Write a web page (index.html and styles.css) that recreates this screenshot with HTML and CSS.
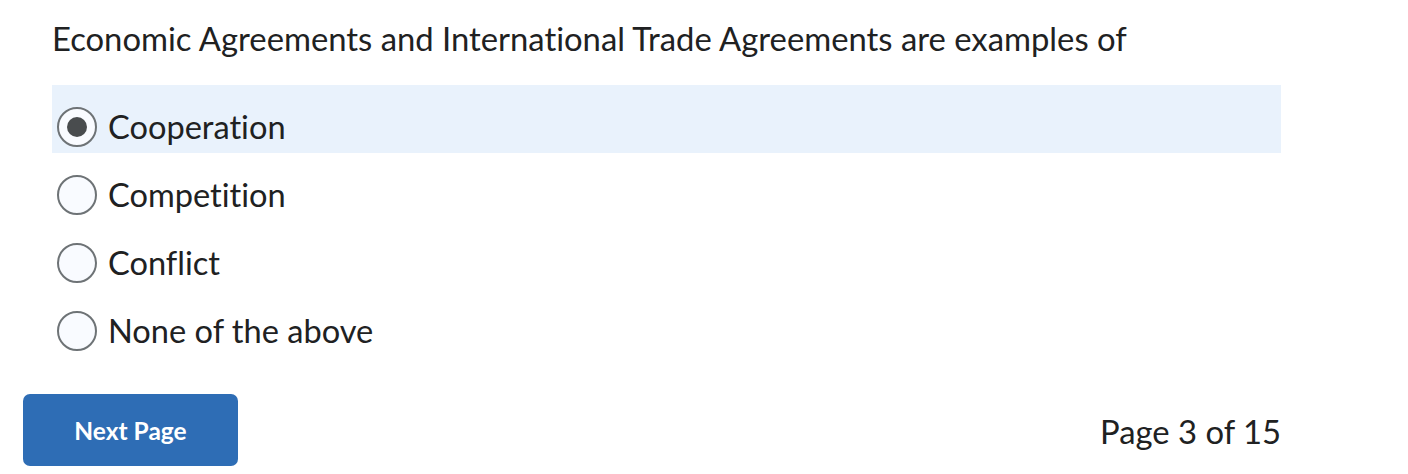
FILE: index.html
```html
<!DOCTYPE html>
<html>
<head>
<meta charset="utf-8">
<link rel="stylesheet" href="styles.css">
</head>
<body>
<div class="page">
  <p class="question">Economic Agreements and International Trade Agreements are examples of</p>
  <div class="options">
    <label class="option selected"><span class="radio"><span class="dot"></span></span><span class="label">Cooperation</span></label>
    <label class="option"><span class="radio"></span><span class="label">Competition</span></label>
    <label class="option"><span class="radio"></span><span class="label">Conflict</span></label>
    <label class="option"><span class="radio"></span><span class="label">None of the above</span></label>
  </div>
  <div class="footer">
    <button class="next">Next Page</button>
    <span class="pager">Page 3 of 15</span>
  </div>
</div>
</body>
</html>
```
FILE: styles.css
```css
html, body { margin: 0; padding: 0; background: #fff; }
body { font-family: Lato, "Open Sans", sans-serif; color: #202122; font-variant-ligatures: none; }
.page { width: 1281px; }
.question { margin: 0; padding: 19px 0 0 52px; font-size: 32.8px; line-height: 40px; height: 85px; box-sizing: border-box; white-space: nowrap; }
.options { margin-left: 52px; display: flex; flex-direction: column; }
.option { display: flex; align-items: center; height: 68px; padding: 16px 0 0 5px; box-sizing: border-box; }
.option.selected { background: #e9f2fc; }
.radio { width: 36px; height: 36px; border: 2px solid #6e7376; border-radius: 50%; background: #f9fbff; box-sizing: content-box; display: flex; align-items: center; justify-content: center; flex: none; }
.dot { width: 20px; height: 20px; border-radius: 50%; background: #494c4e; }
.label { font-size: 32.6px; margin-left: 11px; line-height: 40px; }
.footer { display: flex; justify-content: space-between; align-items: center; margin-top: 37px; padding-left: 23px; }
.next { width: 215px; height: 72px; background: #2e6db5; color: #fff; border: none; border-radius: 7px; font-family: Lato, sans-serif; font-weight: 700; font-size: 24.5px; padding: 0; font-variant-ligatures: none; }
.pager { font-size: 32.8px; margin-top: 2px; }
```
